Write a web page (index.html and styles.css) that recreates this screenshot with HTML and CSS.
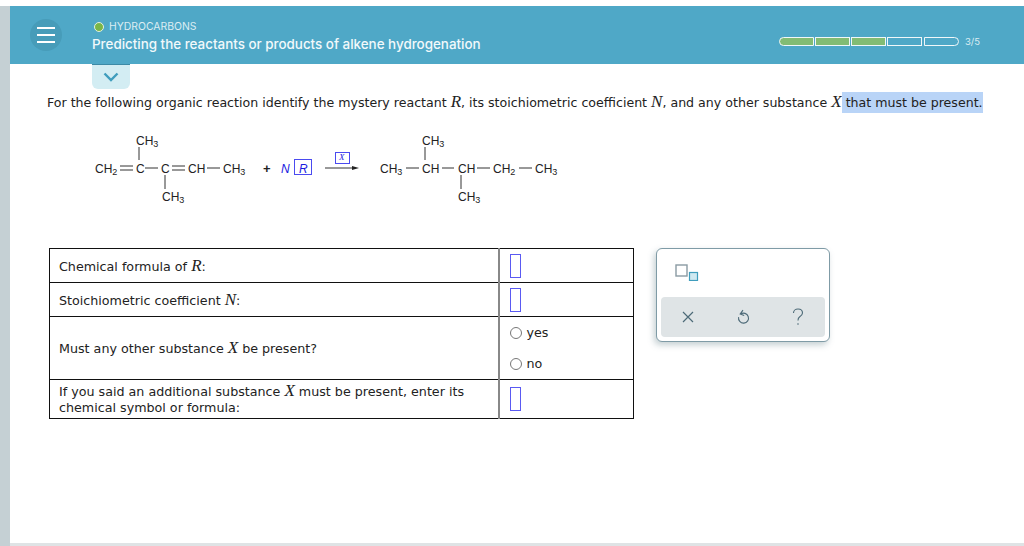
FILE: index.html
```html
<!DOCTYPE html>
<html lang="en">
<head>
  <meta charset="UTF-8" />
  <title>Predicting the reactants or products of alkene hydrogenation</title>
  <link rel="stylesheet" href="styles.css">
</head>
<body>
  <div class="rail"></div>
  <div class="page">
    <header class="topbar">
      <button class="menu-btn" aria-label="Menu"><span></span><span></span><span></span></button>
      <div class="titles">
        <div class="topic"><i class="dot"></i>HYDROCARBONS</div>
        <div class="lesson">Predicting the reactants or products of alkene hydrogenation</div>
      </div>
      <div class="progress">
        <div class="seg first done"></div>
        <div class="seg done"></div>
        <div class="seg done"></div>
        <div class="seg"></div>
        <div class="seg last"></div>
        <span class="count">3/5</span>
      </div>
    </header>

    <div class="drop-tab">
      <svg width="16" height="10" viewBox="0 0 16 10"><path d="M1.5 1.5 8 8l6.5-6.5" fill="none" stroke="#3f9dbd" stroke-width="2.4"/></svg>
    </div>

    <main class="content">
      <p class="question">For the following organic reaction identify the mystery reactant <var>R</var>, its stoichiometric coefficient <var>N</var>, and any other substance <var>X</var><span class="selected"> that must be present.</span></p>

      <svg class="scheme" width="570" height="112" viewBox="0 0 570 112">
        <g class="chem">
          <text x="136" y="20">CH<tspan class="sub" dy="2">3</tspan></text>
          <text x="95" y="48">CH<tspan class="sub" dy="2">2</tspan></text>
          <text x="136" y="48">C</text>
          <text x="161" y="48">C</text>
          <text x="188" y="48">CH</text>
          <text x="223" y="48">CH<tspan class="sub" dy="2">3</tspan></text>
          <text x="162" y="76">CH<tspan class="sub" dy="2">3</tspan></text>
          <text x="380" y="48">CH<tspan class="sub" dy="2">3</tspan></text>
          <text x="422" y="20">CH<tspan class="sub" dy="2">3</tspan></text>
          <text x="422" y="48">CH</text>
          <text x="458" y="48">CH</text>
          <text x="493" y="48">CH<tspan class="sub" dy="2">2</tspan></text>
          <text x="535" y="48">CH<tspan class="sub" dy="2">3</tspan></text>
          <text x="458" y="76">CH<tspan class="sub" dy="2">3</tspan></text>
          <text class="plus" x="263" y="48">+</text>
          <text class="blue" x="281" y="48">N</text>
          <text class="blue" x="299" y="48">R</text>
          <text class="blue small" x="339" y="35">X</text>
        </g>
        <g class="bonds">
          <path d="M139 22v13M165 50v14M120 41h13M120 45h13M145 43h13M172 41h13M172 45h13M207 43h13"/>
          <path d="M406 43h13M442 43h12M477 43h13M519 43h13M425 22v13M461 50v14"/>
          <path d="M325 43h28"/>
        </g>
        <path class="arrow" d="M352 41l7 2-7 2z"/>
        <rect class="box" x="294.5" y="34.5" width="17" height="15"/>
        <rect class="box" x="335.5" y="27.5" width="14" height="11"/>
      </svg>

      <div class="work">
        <table class="answers">
          <tr class="short">
            <td>Chemical formula of <var>R</var>:</td>
            <td class="cell-in"><i class="slot"></i></td>
          </tr>
          <tr class="short">
            <td>Stoichiometric coefficient <var>N</var>:</td>
            <td class="cell-in"><i class="slot"></i></td>
          </tr>
          <tr>
            <td>Must any other substance <var>X</var> be present?</td>
            <td class="cell-in">
              <label class="choice"><i class="radio"></i>yes</label>
              <label class="choice"><i class="radio"></i>no</label>
            </td>
          </tr>
          <tr>
            <td class="wrap">If you said an additional substance <var>X</var> must be present, enter its chemical symbol or formula:</td>
            <td class="cell-in"><i class="slot"></i></td>
          </tr>
        </table>

        <div class="palette">
          <div class="palette-top">
            <svg width="24" height="17" viewBox="0 0 24 17">
              <rect x="1" y="1" width="11" height="11" fill="#fff" stroke="#8a9ba3" stroke-width="1.4"/>
              <rect x="14.5" y="8.5" width="8" height="8" fill="#cfe9f1" stroke="#3f9dbd" stroke-width="1.2"/>
            </svg>
          </div>
          <div class="palette-tools">
            <svg width="12" height="12" viewBox="0 0 12 12"><path d="M1 1l10 10M11 1 1 11" fill="none" stroke="#4d6a78" stroke-width="1.2"/></svg>
            <svg width="14" height="16" viewBox="0 0 14 16"><path d="M4.6 5.1A5 5 0 1 1 2.6 8.2M7 1.2 4.2 5l4 1.4" fill="none" stroke="#4d6a78" stroke-width="1.1"/></svg>
            <svg width="12" height="18" viewBox="0 0 12 18"><path d="M1.5 5C1.5 2.5 3.5 1 6 1s4.5 1.6 4.5 4c0 2-1.5 3-3 4-1 .7-1.5 1.5-1.5 3.5" fill="none" stroke="#4d6a78" stroke-width="1.1"/><circle cx="6" cy="16" r=".8" fill="#4d6a78"/></svg>
          </div>
        </div>
      </div>
    </main>
  </div>
</body>
</html>
```

FILE: styles.css
```css
* {
  box-sizing: border-box;
}

html, body {
  height: 100%;
}

body {
  margin: 0;
  padding-top: 6px;
  display: flex;
  overflow: hidden;
  background: #fff;
  color: #222;
  font-family: "DejaVu Sans", sans-serif;
  font-size: 12px;
}

.rail {
  width: 10px;
  flex: none;
  background: #c5d0d4;
}

.page {
  flex: 1;
  min-width: 0;
  border-bottom: 3px solid #dfe3e5;
}

.topbar {
  height: 58px;
  display: flex;
  align-items: center;
  padding-left: 20px;
  background: #4fa8c7;
  color: #fff;
}

.menu-btn {
  width: 32px;
  height: 32px;
  margin-right: 30px;
  padding: 0;
  display: flex;
  flex-direction: column;
  align-items: center;
  justify-content: center;
  gap: 5px;
  border: none;
  border-radius: 50%;
  background: #479cb9;
}

.menu-btn span {
  width: 18px;
  height: 2px;
  background: #fff;
}

.titles {
  flex: 1;
  padding-top: 2px;
  font-family: Inter, sans-serif;
}

.topic {
  display: flex;
  align-items: center;
  gap: 5px;
  padding-left: 2px;
  margin-top: 1px;
  font-size: 10.4px;
  line-height: 14px;
  color: #dcedf3;
}

.dot {
  width: 10px;
  height: 10px;
  border: 1px solid #e4f0e0;
  border-radius: 50%;
  background: #7ab648;
}

.lesson {
  margin-top: 1px;
  font-size: 13.4px;
  line-height: 18px;
  font-weight: 500;
  color: #f2f9fb;
}

.progress {
  display: flex;
  align-items: center;
  gap: 1.25px;
  margin-top: 13px;
  padding-right: 44px;
}

.seg {
  width: 35px;
  height: 9px;
  border: 1px solid #f0f7f9;
}

.seg.done {
  background: #82bc74;
}

.seg.first {
  border-radius: 5px 0 0 5px;
}

.seg.last {
  border-radius: 0 5px 5px 0;
}

.count {
  margin-left: 5px;
  font-family: Inter, sans-serif;
  font-size: 9.5px;
  color: #dcedf3;
}

.drop-tab {
  width: 38px;
  height: 25px;
  margin-left: 82px;
  display: flex;
  align-items: center;
  justify-content: center;
  border-top: 1px solid #3d8aa6;
  border-radius: 0 0 6px 6px;
  background: #d3edf3;
}

.content {
  padding: 5px 0 0 37px;
}

.question {
  margin: 0;
  font-size: 12.6px;
  line-height: 17px;
  white-space: nowrap;
}

var {
  font-family: "Liberation Serif", serif;
  font-size: 17px;
  line-height: 12px;
  font-style: italic;
}

.selected {
  background: #b9d4f7;
  padding: 3px 0;
}

.scheme {
  display: block;
  margin-top: 14px;
  margin-left: -47px;
}

.chem text {
  font-family: "Liberation Sans", sans-serif;
  font-size: 12px;
  fill: #222;
}

.chem .sub {
  font-size: 9px;
}

.chem .plus {
  font-weight: 700;
  font-size: 13px;
}

.chem .blue {
  fill: #1a1ae0;
  font-style: italic;
}

.chem .small {
  font-family: "Liberation Serif", serif;
  font-size: 9px;
}

.bonds path {
  fill: none;
  stroke: #333;
  stroke-width: 1;
}

.arrow {
  fill: #222;
}

.box {
  fill: none;
  stroke: #4a4af0;
  stroke-width: 1;
}

.work {
  display: flex;
  align-items: flex-start;
  margin-top: 11px;
}

.answers {
  width: 585px;
  margin-left: 2px;
  border-collapse: collapse;
  font-size: 12.7px;
  line-height: 16px;
}

.answers td {
  padding: 0 9px;
  border: 1px solid #111;
}

.answers td:first-child {
  padding-top: 2px;
}

.answers .cell-in {
  width: 135px;
  padding: 0 10px;
  border-left: 2px solid #888;
}

.answers tr.short {
  height: 34px;
}

.answers .wrap {
  padding-right: 30px;
  height: 39px;
}

.slot {
  display: block;
  width: 11px;
  height: 24px;
  border: 1px solid #5a5af2;
}

.choice {
  height: 31px;
  display: flex;
  align-items: center;
  gap: 5px;
}

.radio {
  width: 12px;
  height: 12px;
  border: 1px solid #777;
  border-radius: 50%;
  background: #fff;
}

.palette {
  width: 174px;
  height: 94px;
  margin-left: 22px;
  padding: 0 4px 4px;
  display: flex;
  flex-direction: column;
  border: 1px solid #7f9ba6;
  border-radius: 6px;
  background: #fff;
  box-shadow: -2px 3px 6px rgba(90, 120, 130, 0.35);
}

.palette-top {
  flex: 1;
  padding: 15px 0 0 14px;
}

.palette-tools {
  height: 40px;
  display: flex;
  align-items: center;
  justify-content: space-around;
  border-radius: 4px;
  background: #dfe4e6;
}
```
